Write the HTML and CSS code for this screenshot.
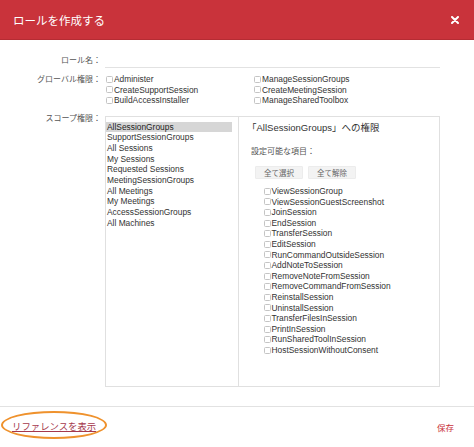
FILE: index.html
```html
<!DOCTYPE html>
<html lang="ja">
<head>
<meta charset="utf-8">
<title>ロールを作成する</title>
<link rel="stylesheet" href="styles.css">
</head>
<body>
<div class="dialog">
  <header class="head">
    <h1 class="title">ロールを作成する</h1>
    <span class="close"><svg width="8" height="8" viewBox="0 0 8 8"><path d="M1 1L7 7M7 1L1 7" stroke="#fff" stroke-width="2" stroke-linecap="round"/></svg></span>
  </header>
  <main class="form">
    <div class="row name-row">
      <div class="lbl">ロール名：</div>
      <div class="field name-input"></div>
    </div>
    <div class="row global-row">
      <div class="lbl">グローバル権限：</div>
      <div class="field global-grid">
        <label class="chk"><span class="box"></span>Administer</label>
        <label class="chk"><span class="box"></span>ManageSessionGroups</label>
        <label class="chk"><span class="box"></span>CreateSupportSession</label>
        <label class="chk"><span class="box"></span>CreateMeetingSession</label>
        <label class="chk"><span class="box"></span>BuildAccessInstaller</label>
        <label class="chk"><span class="box"></span>ManageSharedToolbox</label>
      </div>
    </div>
    <div class="row scope-row">
      <div class="lbl scope-lbl">スコープ権限：</div>
      <div class="field scope">
        <ul class="scope-list">
          <li class="sel">AllSessionGroups</li>
          <li>SupportSessionGroups</li>
          <li>All Sessions</li>
          <li>My Sessions</li>
          <li>Requested Sessions</li>
          <li>MeetingSessionGroups</li>
          <li>All Meetings</li>
          <li>My Meetings</li>
          <li>AccessSessionGroups</li>
          <li>All Machines</li>
        </ul>
        <div class="perm">
          <div class="perm-title">「AllSessionGroups」への権限</div>
          <div class="perm-sub">設定可能な項目：</div>
          <div class="btns">
            <button class="btn">全て選択</button>
            <button class="btn">全て解除</button>
          </div>
          <div class="perm-list">
            <label class="chk"><span class="box"></span>ViewSessionGroup</label>
            <label class="chk"><span class="box"></span>ViewSessionGuestScreenshot</label>
            <label class="chk"><span class="box"></span>JoinSession</label>
            <label class="chk"><span class="box"></span>EndSession</label>
            <label class="chk"><span class="box"></span>TransferSession</label>
            <label class="chk"><span class="box"></span>EditSession</label>
            <label class="chk"><span class="box"></span>RunCommandOutsideSession</label>
            <label class="chk"><span class="box"></span>AddNoteToSession</label>
            <label class="chk"><span class="box"></span>RemoveNoteFromSession</label>
            <label class="chk"><span class="box"></span>RemoveCommandFromSession</label>
            <label class="chk"><span class="box"></span>ReinstallSession</label>
            <label class="chk"><span class="box"></span>UninstallSession</label>
            <label class="chk"><span class="box"></span>TransferFilesInSession</label>
            <label class="chk"><span class="box"></span>PrintInSession</label>
            <label class="chk"><span class="box"></span>RunSharedToolInSession</label>
            <label class="chk"><span class="box"></span>HostSessionWithoutConsent</label>
          </div>
        </div>
      </div>
    </div>
  </main>
  <footer class="foot">
    <a class="ref-link" href="#">リファレンスを表示<span class="ring"></span></a>
    <a class="save" href="#">保存</a>
  </footer>
</div>
</body>
</html>
```

FILE: styles.css
```css
* { box-sizing: border-box; }
html, body { margin: 0; padding: 0; background: #fff; }
body {
  font-family: "Liberation Sans", "Noto Sans CJK JP", sans-serif;
  color: #333;
  width: 474px;
  height: 447px;
  overflow: hidden;
}
.dialog { width: 474px; height: 447px; display: flex; flex-direction: column; }

.head {
  height: 40px;
  background: #c9333b;
  border-bottom: 1px solid #b52c33;
  display: flex;
  align-items: center;
  justify-content: space-between;
  padding: 0 15px 0 13px;
}
.title {
  margin: 0;
  font-family: "Noto Sans CJK JP", sans-serif;
  font-size: 11.5px;
  font-weight: 400;
  color: #fff;
  line-height: 14px;
}
.close { display: flex; width: 8px; height: 8px; }

.form { padding: 13px 34px 0 0; flex: 1; }
.row { display: flex; gap: 4px; }
.lbl {
  width: 101px;
  flex: none;
  text-align: right;
  font-family: "Noto Sans CJK JP", sans-serif;
  font-size: 8px;
  line-height: 10.5px;
  color: #555;
}
.field { flex: 1; }

.name-row { align-items: center; height: 15px; }
.name-input { height: 15px; border-bottom: 1px solid #e2e2e2; }

.global-row { margin-top: 6px; }
.global-grid {
  display: grid;
  grid-template-columns: 148px 1fr;
  padding-left: 1px;
}
.chk {
  display: flex;
  align-items: center;
  font-size: 8.4px;
  line-height: 10.5px;
  height: 10.5px;
  color: #333;
  white-space: nowrap;
}
.box {
  width: 7px;
  height: 7px;
  border: 1px solid #c4c4c4;
  border-radius: 1.5px;
  background: #fff;
  margin-right: 1px;
  flex: none;
}

.scope-row { margin-top: 10px; }
.scope-lbl { margin-top: -3px; }
.scope {
  height: 271px;
  border: 1px solid #e0e0e0;
  display: flex;
}
.scope-list {
  list-style: none;
  margin: 0;
  padding: 5px 6px 0 0;
  width: 133px;
  flex: none;
  border-right: 1.5px solid #e0e0e0;
}
.scope-list li {
  font-size: 8.4px;
  line-height: 10.7px;
  padding-left: 1px;
  color: #333;
  white-space: nowrap;
}
.scope-list li.sel { background: #d6d6d6; color: #222; }

.perm { flex: 1; padding: 5px 0 0 8px; }
.perm-title {
  font-size: 9.5px;
  line-height: 12px;
  color: #333;
  white-space: nowrap;
}
.perm-sub {
  margin: 11px 0 0 4px;
  font-family: "Noto Sans CJK JP", sans-serif;
  font-size: 8px;
  line-height: 12px;
  color: #555;
}
.btns { display: flex; gap: 5px; margin: 9px 0 0 8px; }
.btn {
  font-family: "Noto Sans CJK JP", sans-serif;
  font-size: 7.5px;
  line-height: 12px;
  height: 13px;
  padding: 0 8px;
  border: 1px solid #ececec;
  border-radius: 1px;
  background: #f3f3f3;
  color: #666;
  margin: 0;
}
.perm-list { margin: 7.5px 0 0 17px; }
.perm-list .chk { height: 10.6px; line-height: 10.6px; }
.perm-list .box { margin-right: 0.5px; }

.foot {
  height: 41px;
  border-top: 1px solid #e2e2e2;
  display: flex;
  align-items: center;
  justify-content: space-between;
  padding: 0 20px 0 12px;
}
.ref-link {
  position: relative;
  font-family: "Noto Sans CJK JP", sans-serif;
  font-size: 9.4px;
  line-height: 14px;
  color: #a5384c;
  text-decoration: underline;
  text-underline-offset: 1px;
  margin-top: -3px;
}
.ring {
  position: absolute;
  left: -11px;
  right: -11px;
  top: -8px;
  bottom: -6px;
  border: 2px solid #ef922d;
  border-radius: 50%;
}
.save {
  font-family: "Noto Sans CJK JP", sans-serif;
  font-size: 8.5px;
  line-height: 12px;
  color: #c9333b;
  text-decoration: none;
}
```
